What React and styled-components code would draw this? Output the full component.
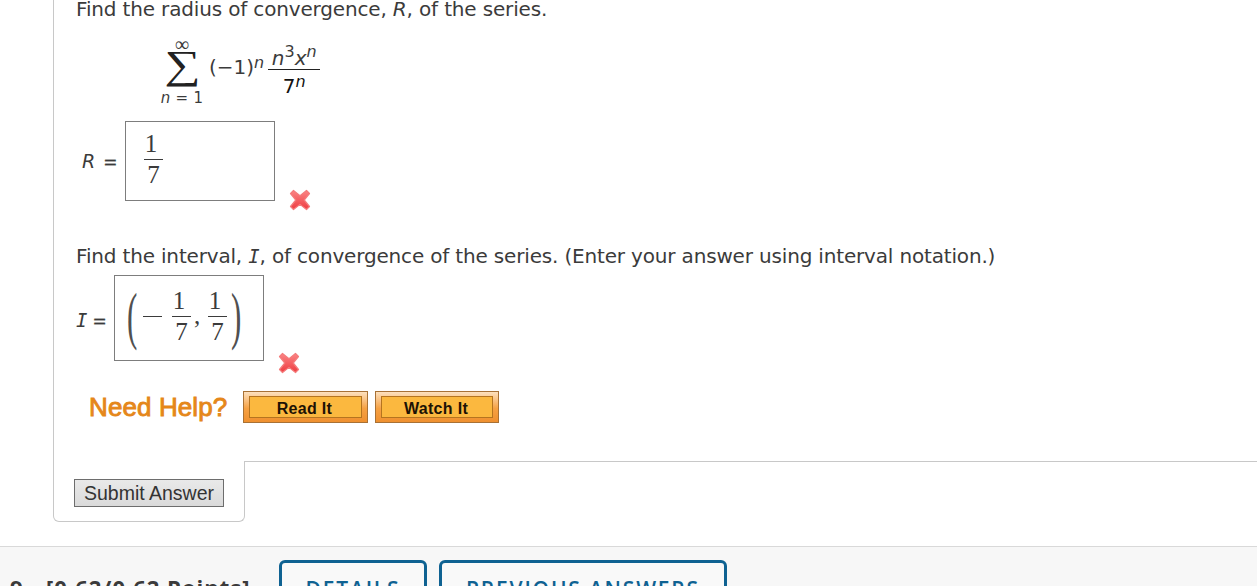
import React from 'react'
import styled, { createGlobalStyle } from 'styled-components'

const SANS = "'DejaVu Sans', Verdana, sans-serif"
const SERIF = "'Liberation Serif', 'Times New Roman', serif"
const ARIAL = "'Liberation Sans', Arial, sans-serif"

const GlobalStyle = createGlobalStyle`
  * {
    box-sizing: border-box;
  }

  body {
    margin: 0;
    overflow: hidden;
    background: #fff;
  }
`

const Page = styled.main`
  display: flex;
  flex-direction: column;
  height: 586px;
  overflow: hidden;
  color: #3b3b3b;
  font-size: 20px;
  font-family: ${SANS};
`

const Problem = styled.section`
  flex: none;
  height: 461px;
  margin-left: 53px;
  padding-left: 22px;
  border-left: 1px solid #c8c8c8;
`

const Prompt = styled.p`
  height: 24px;
  margin: ${({ $top }) => $top}px 0 0;
  line-height: 24px;
  letter-spacing: ${({ $spacing }) => $spacing}px;
  white-space: nowrap;
`

const Italic = styled.em`
  font-style: italic;
`

// Verdana style capital I, with its bars
const BarredI = styled.em`
  font-style: italic;
  font-size: 19px;
  font-family: 'DejaVu Sans Mono', monospace;
`

const Series = styled.div`
  display: flex;
  height: 80px;
  margin-top: 17px;
  padding-left: 83px;
  white-space: nowrap;
`

const Summation = styled.div`
  display: flex;
  flex-direction: column;
  align-items: center;
  width: 46px;

  .upper {
    height: 13px;
    font-size: 20px;
    font-family: ${SERIF};
    line-height: 12px;
  }

  .sigma {
    height: 37px;
    color: #222;
    font-size: 40px;
    font-family: ${SERIF};
    line-height: 28px;
    transform: scaleX(1.27);
  }

  .lower {
    height: 20px;
    font-size: 15px;
    line-height: 20px;
    letter-spacing: 0.3px;
  }
`

const Factor = styled.span`
  margin: 17px 0 0 4px;
  line-height: 24px;
`

const Power = styled.sup`
  display: inline-block;
  font-style: ${({ $upright }) => ($upright ? 'normal' : 'italic')};
  font-size: 16px;
  line-height: 10px;
  vertical-align: ${({ $raise = 6 }) => $raise}px;
`

const SeriesFraction = styled.span`
  display: flex;
  flex-direction: column;
  align-items: center;
  align-self: flex-start;
  width: 52px;
  margin: 4px 0 0 4px;

  .top {
    height: 27px;
    line-height: 32px;
  }

  .bottom {
    width: 100%;
    height: 30px;
    border-top: 1px solid #222;
    color: #111;
    line-height: 33px;
    text-align: center;
  }
`

const Answer = styled.div`
  display: flex;
  align-items: center;
  height: ${({ $height }) => $height}px;
  margin-top: ${({ $top }) => $top}px;
`

const Label = styled.span`
  width: ${({ $width }) => $width}px;
  padding-left: ${({ $indent }) => $indent}px;
  padding-top: ${({ $drop = 0 }) => $drop}px;
  font-size: 19px;
  line-height: 24px;
  white-space: nowrap;

  b {
    margin-left: ${({ $gap }) => $gap}px;
    font-size: 17px;
    font-weight: normal;
    -webkit-text-stroke: 0.3px;
  }
`

const MathBox = styled.div`
  display: flex;
  align-items: center;
  width: 150px;
  height: 100%;
  padding: 0 0 ${({ $lift }) => $lift}px ${({ $indent }) => $indent}px;
  border: 1px solid #7d7d7d;
  font-size: 25px;
  font-family: ${SERIF};
`

const Fraction = styled.span`
  display: flex;
  flex-direction: column;
  width: 19px;
  text-align: center;

  span {
    height: 29px;
    padding-right: 5px;
    line-height: 27px;
  }

  span + span {
    height: 29px;
    padding-right: 0;
    border-top: 1px solid #3b3b3b;
    line-height: 30px;
  }
`

const Paren = styled.span`
  width: 11px;
  margin-left: ${({ $gap = 0 }) => $gap}px;
  color: #505050;
  font-size: 31px;
  line-height: 30px;
  transform: scaleY(2.05);
`

const Minus = styled.span`
  width: 19px;
  height: 1px;
  margin: 0 10px 0 5px;
  overflow: hidden;
  background: #3b3b3b;
`

const Comma = styled.span`
  width: 17px;
  padding-left: 3px;
  line-height: 28px;
`

const Wrong = styled.svg`
  align-self: flex-end;
  flex: none;
  width: 22px;
  height: 22px;
  margin: 0 0 ${({ $drop }) => -$drop}px 14px;
`

const Help = styled.div`
  display: flex;
  align-items: center;
  height: 32px;
  margin-top: 30px;
  padding-left: 13px;
  font-family: ${ARIAL};
`

const HelpTitle = styled.span`
  width: 154px;
  color: #e5871a;
  font-size: 26px;
  line-height: 32px;
  letter-spacing: 0.1px;
  white-space: nowrap;
  -webkit-text-stroke: 0.9px #e5871a;
`

const HelpButton = styled.button`
  width: ${({ $width }) => $width}px;
  height: 32px;
  margin-right: 7px;
  padding: 4px 5px;
  border: 1px solid #a87135;
  background: linear-gradient(#fde0bd, #f6a143 55%, #ef902f);
  color: #1c1205;
  font-weight: bold;
  font-size: 16px;
  font-family: ${ARIAL};
  letter-spacing: 0.3px;

  span {
    display: block;
    height: 22px;
    padding-right: 2px;
    border: 1px solid #b5741f;
    background: #fbb83f;
    line-height: 23px;
  }
`

const Footer = styled.div`
  display: flex;
  flex: none;
  height: 61px;
  margin-left: 53px;
`

const SubmitTab = styled.div`
  width: 192px;
  padding: 18px 0 0 20px;
  border: solid #c8c8c8;
  border-width: 0 1px 1px;
  border-radius: 0 0 6px 6px;
`

const FooterRule = styled.div`
  flex: 1;
  height: 1px;
  margin-left: -1px;
  background: #c8c8c8;
`

const SubmitButton = styled.button`
  width: 150px;
  height: 28px;
  padding: 0;
  border: 1px solid #6d6d6d;
  background: linear-gradient(#e9e9e9, #dadada);
  color: #333;
  font-size: 19.5px;
  font-family: ${ARIAL};
  line-height: 26px;
  white-space: nowrap;
`

const NextQuestion = styled.header`
  display: flex;
  flex: none;
  align-items: flex-start;
  height: 60px;
  margin-top: 24px;
  padding: 13px 0 0 10px;
  border-top: 1px solid #d9d9d9;
  background: #f7f7f7;
  font-family: 'Open Sans', sans-serif;

  strong {
    margin-top: 13px;
    font-size: 22px;
    line-height: 28px;
    letter-spacing: 1px;
    white-space: pre;
  }

  .number {
    width: 36px;
  }

  .points {
    width: 233px;
  }
`

const OutlineButton = styled.button`
  width: ${({ $width }) => $width}px;
  height: 58px;
  margin-right: 12px;
  padding: 0;
  border: 3px solid #0f6292;
  border-radius: 6px;
  background: #f9f9f9;
  color: #0f6292;
  font-weight: 600;
  font-size: 21px;
  font-family: 'Open Sans', sans-serif;
  letter-spacing: 1.8px;
  line-height: 52px;
  white-space: nowrap;
`

function WrongMark({ drop }) {
  return (
    <Wrong viewBox="0 0 22 22" $drop={drop}>
      <defs>
        <linearGradient id="wrong" x1="0" y1="0" x2="0" y2="1">
          <stop offset="0" stopColor="#fb8585" />
          <stop offset="1" stopColor="#ee3b40" />
        </linearGradient>
      </defs>
      <path
        d="M4.5 1.5 11 6.8 17.5 1.5 20.5 4.5 15.2 11 20.5 17.5 17.5 20.5 11 15.4 4.5 20.5 1.5 17.5 6.8 11 1.5 4.5Z"
        fill="url(#wrong)"
        stroke="#f47b7b"
        strokeWidth="1.2"
        strokeLinejoin="round"
      />
    </Wrong>
  )
}

function Seventh() {
  return (
    <Fraction>
      <span>1</span>
      <span>7</span>
    </Fraction>
  )
}

export default function App() {
  return (
    <Page>
      <GlobalStyle />

      <Problem>
        <Prompt $top={-3} $spacing={-0.16}>
          Find the radius of convergence, <Italic>R</Italic>, of the series.
        </Prompt>

        <Series>
          <Summation>
            <span className="upper">∞</span>
            <span className="sigma">∑</span>
            <span className="lower">
              <Italic>n</Italic> = 1
            </span>
          </Summation>
          <Factor>
            (−1)<Power>n</Power>
          </Factor>
          <SeriesFraction>
            <span className="top">
              <Italic>n</Italic>
              <Power $upright $raise={8}>
                3
              </Power>
              <Italic>x</Italic>
              <Power $raise={8}>n</Power>
            </span>
            <span className="bottom">
              7<Power>n</Power>
            </span>
          </SeriesFraction>
        </Series>

        <Answer $top={3} $height={80}>
          <Label $width={49} $indent={6} $gap={2}>
            <Italic>R</Italic> <b>=</b>
          </Label>
          <MathBox $indent={18} $lift={4}>
            <Seventh />
          </MathBox>
          <WrongMark drop={10} />
        </Answer>

        <Prompt $top={43} $spacing={-0.17}>
          Find the interval, <BarredI>I</BarredI>, of convergence of the series. (Enter your answer using interval
          notation.)
        </Prompt>

        <Answer $top={7} $height={86}>
          <Label $width={38} $indent={0} $gap={-1} $drop={4}>
            <BarredI>I</BarredI> <b>=</b>
          </Label>
          <MathBox $indent={12} $lift={4}>
            <Paren>(</Paren>
            <Minus>−</Minus>
            <Seventh />
            <Comma>,</Comma>
            <Seventh />
            <Paren $gap={4}>)</Paren>
          </MathBox>
          <WrongMark drop={13} />
        </Answer>

        <Help>
          <HelpTitle>Need Help?</HelpTitle>
          <HelpButton $width={125}>
            <span>Read It</span>
          </HelpButton>
          <HelpButton $width={124}>
            <span>Watch It</span>
          </HelpButton>
        </Help>
      </Problem>

      <Footer>
        <SubmitTab>
          <SubmitButton>Submit Answer</SubmitButton>
        </SubmitTab>
        <FooterRule />
      </Footer>

      <NextQuestion>
        <strong className="number">9.</strong>
        <strong className="points">[0.62/0.62 Points]</strong>
        <OutlineButton $width={148}>DETAILS</OutlineButton>
        <OutlineButton $width={288}>PREVIOUS ANSWERS</OutlineButton>
      </NextQuestion>
    </Page>
  )
}
